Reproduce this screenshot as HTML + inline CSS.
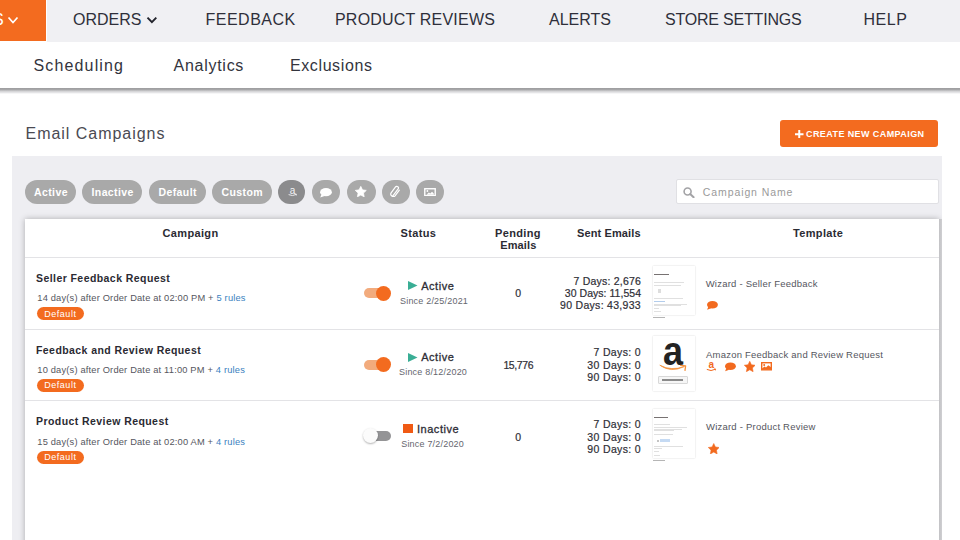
<!DOCTYPE html>
<html><head><meta charset="utf-8">
<style>
*{margin:0;padding:0;box-sizing:border-box}
html,body{width:960px;height:540px;overflow:hidden;background:#fff;font-family:"Liberation Sans",sans-serif;color:#2f2f37}
.a{position:absolute}
.t{position:absolute;white-space:nowrap;line-height:1}
#topnav{left:47px;top:0;width:913px;height:42px;background:#f0f0f3}
#orange{left:0;top:0;width:46px;height:41px;background:#f36b1f;overflow:hidden}
.nav{font-size:16px;color:#2e2f3a;top:11.5px}
#subnav{left:0;top:42px;width:960px;height:46px;background:#fff}
#shadow{left:0;top:87.5px;width:960px;height:6.5px;background:linear-gradient(#9c9c9e 0%,#a8a8aa 30%,#cfcfd1 50%,#e4e4e6 75%,#fff 100%)}
.sub{font-size:16px;color:#33343d;top:57.7px;letter-spacing:0.9px}
#title{left:25.5px;top:125.7px;font-size:16px;color:#4a4a52;letter-spacing:0.97px}
#btn{left:780px;top:120px;width:158px;height:27px;background:#f36b1f;border-radius:3px}
#btntxt{left:806px;top:129.6px;font-size:9px;font-weight:bold;color:#fff;letter-spacing:0.41px}
#gray{left:12px;top:156px;width:930px;height:400px;background:#eeeef2;overflow:hidden}
.pill{position:absolute;top:180px;height:24px;border-radius:12px;background:#a9a9a9}
.ptxt{font-size:10.5px;font-weight:bold;color:#fff;top:186.9px;letter-spacing:0.4px}
#search{left:676px;top:179px;width:262.5px;height:25.2px;background:#fff;border:1px solid #e0e0e4;border-radius:2px}
#ph{left:702.8px;top:186.9px;font-size:10.5px;color:#9a9a9a;letter-spacing:0.9px}
#card{left:13px;top:63px;width:913.5px;height:340px;background:#fff;box-shadow:0 0 6px rgba(0,0,0,0.28)}
.hline{position:absolute;left:25px;width:913.5px;height:1px;background:#e3e3e6}
.hd{font-size:11px;font-weight:bold;color:#2b2b33;top:227.9px;letter-spacing:0.35px}
.ttl{font-size:10.5px;font-weight:bold;color:#2a2a32;letter-spacing:0.43px}
.sub2{font-size:9.3px;color:#55565e;letter-spacing:0.18px}
.sub2 b{font-weight:normal;color:#3b7fc0}
.badge{position:absolute;left:37px;width:47px;height:13px;border-radius:7px;background:#f36b1f}
.btxt{font-size:9px;color:#fff;letter-spacing:0.54px}
.st{font-size:11px;font-weight:normal;color:#2e2e36;-webkit-text-stroke:0.3px #2e2e36;letter-spacing:0.55px}
.since{font-size:9px;color:#65666e;letter-spacing:0.2px}
.num{font-size:10.5px;color:#2e2e36;-webkit-text-stroke:0.2px #2e2e36;letter-spacing:0.12px}
.tn{font-size:9.5px;color:#55565e;letter-spacing:0.22px}
.row{position:absolute;left:0;width:960px;height:0}
.trk{width:24px;height:10px;border-radius:5px;background:#f2ab7d}
.trk.off{width:23px;height:9.5px;background:#949496}
.knob{width:15px;height:15px;border-radius:50%;background:#f36b1f}
.knob.off{background:#fbfbfb;box-shadow:0 1px 2px rgba(0,0,0,0.3)}
.r{right:319px;text-align:right}
.thumb{background:#fff;box-shadow:0 0 1.5px rgba(0,0,0,0.18)}
.tl{left:1.5px;height:1px;background:#e0e0e0}

</style></head><body>
<div id="topnav" class="a"></div>
<div id="orange" class="a">
  <div class="t" style="left:-7px;top:11.5px;font-size:16px;color:#fff">S</div>
  <svg class="a" style="left:7px;top:15.5px" width="12" height="9" viewBox="0 0 12 9"><polyline points="1.5,1.5 6,6.5 10.5,1.5" fill="none" stroke="#fff" stroke-width="1.7"/></svg>
</div>
<div class="t nav" style="left:73px">ORDERS</div>
<svg class="a" style="left:145.5px;top:16px" width="12" height="9" viewBox="0 0 12 9"><polyline points="1.5,1.7 5.9,6.2 10.3,1.7" fill="none" stroke="#22232c" stroke-width="1.9"/></svg>
<div class="t nav" style="left:205.5px;letter-spacing:0.5px">FEEDBACK</div>
<div class="t nav" style="left:335px;letter-spacing:0.2px">PRODUCT REVIEWS</div>
<div class="t nav" style="left:549px">ALERTS</div>
<div class="t nav" style="left:665px;letter-spacing:-0.2px">STORE SETTINGS</div>
<div class="t nav" style="left:863.5px;letter-spacing:0.5px">HELP</div>

<div id="subnav" class="a"></div><div id="shadow" class="a"></div>
<div class="t sub" style="left:33.5px;letter-spacing:1.15px">Scheduling</div>
<div class="t sub" style="left:173.5px;letter-spacing:0.73px">Analytics</div>
<div class="t sub" style="left:290px;letter-spacing:0.6px">Exclusions</div>

<div id="title" class="t">Email Campaigns</div>
<div id="btn" class="a"></div>
<svg class="a" style="left:795.3px;top:129.7px" width="8.5" height="8.5" viewBox="0 0 8.5 8.5"><path d="M4.25 0V8.5M0 4.25H8.5" stroke="#fff" stroke-width="2"/></svg>
<div id="btntxt" class="t">CREATE NEW CAMPAIGN</div>

<div id="gray" class="a"><div id="card" class="a"></div><div class="a" style="left:926.5px;top:63px;width:3.5px;height:340px;background:linear-gradient(to right,#c2c2c5,#cfcfd2)"></div></div>
<div class="pill" style="left:25px;width:51px"></div>
<div class="t ptxt" style="left:34px">Active</div>
<div class="pill" style="left:82px;width:60px"></div>
<div class="t ptxt" style="left:91.5px">Inactive</div>
<div class="pill" style="left:148.5px;width:57.5px"></div>
<div class="t ptxt" style="left:158.5px">Default</div>
<div class="pill" style="left:212px;width:60px"></div>
<div class="t ptxt" style="left:221.5px">Custom</div>
<div class="pill" style="left:278px;width:27px;background:#8b8b8d"></div>
<div class="pill" style="left:311.5px;width:28.5px"></div>
<div class="pill" style="left:346.5px;width:29px"></div>
<div class="pill" style="left:382px;width:27.5px"></div>
<div class="pill" style="left:416px;width:27.5px"></div>

<div id="search" class="a"></div>
<div id="ph" class="t">Campaign Name</div>

<div class="t hd" style="left:162.5px">Campaign</div>
<div class="t hd" style="left:400.5px">Status</div>
<div class="t hd" style="left:495px">Pending</div>
<div class="t hd" style="left:500.3px;top:240.1px;letter-spacing:0.1px">Emails</div>
<div class="t hd" style="left:577px;letter-spacing:0.12px">Sent Emails</div>
<div class="t hd" style="left:793px">Template</div>
<div class="hline" style="top:257px"></div>
<div class="hline" style="top:329px"></div>
<div class="hline" style="top:400px"></div>


<!-- ROW 1 -->
<div class="row" style="top:0">
  <div class="t ttl" style="left:36px;top:273px">Seller Feedback Request</div>
  <div class="t sub2" style="left:37.3px;top:294.3px">14 day(s) after Order Date at 02:00 PM + <b>5 rules</b></div>
  <div class="badge" style="top:307.2px"></div>
  <div class="t btxt" style="left:44.2px;top:309.9px">Default</div>
  <div class="a trk" style="left:363.5px;top:288px"></div>
  <div class="a knob" style="left:375.6px;top:285.6px"></div>
  <svg class="a" style="left:408px;top:281px" width="10" height="9" viewBox="0 0 10 9"><polygon points="0,0 9.5,4.5 0,9" fill="#3aae95"/></svg>
  <div class="t st" style="left:421.2px;top:280.6px">Active</div>
  <div class="t since" style="left:400px;top:296.5px">Since 2/25/2021</div>
  <div class="t num" style="left:515.2px;top:288.1px">0</div>
  <div class="t num r" style="top:275.6px;letter-spacing:0.2px">7 Days: 2,676</div>
  <div class="t num r" style="top:288.1px;letter-spacing:0.03px">30 Days: 11,554</div>
  <div class="t num r" style="top:300.3px;letter-spacing:0.3px">90 Days: 43,933</div>
  
  <div class="t tn" style="left:705.7px;top:278.9px">Wizard - Seller Feedback</div>
</div>
<!-- ROW 2 -->
<div class="row" style="top:71.5px">
  <div class="t ttl" style="left:36px;top:273px">Feedback and Review Request</div>
  <div class="t sub2" style="left:37.3px;top:294.3px">10 day(s) after Order Date at 11:00 PM + <b>4 rules</b></div>
  <div class="badge" style="top:307.2px"></div>
  <div class="t btxt" style="left:44.2px;top:309.9px">Default</div>
  <div class="a trk" style="left:363.5px;top:288px"></div>
  <div class="a knob" style="left:375.6px;top:285.6px"></div>
  <svg class="a" style="left:408px;top:281px" width="10" height="9" viewBox="0 0 10 9"><polygon points="0,0 9.5,4.5 0,9" fill="#3aae95"/></svg>
  <div class="t st" style="left:421.2px;top:280.6px">Active</div>
  <div class="t since" style="left:399px;top:296.5px">Since 8/12/2020</div>
  <div class="t num" style="left:503.4px;top:288.1px;letter-spacing:-0.4px">15,776</div>
  <div class="t num r" style="top:275.6px;letter-spacing:0.35px">7 Days: 0</div>
  <div class="t num r" style="top:288.1px;letter-spacing:0.35px">30 Days: 0</div>
  <div class="t num r" style="top:300.3px;letter-spacing:0.35px">90 Days: 0</div>
  
  <div class="t tn" style="left:706px;top:278.9px">Amazon Feedback and Review Request</div>
</div>
<!-- ROW 3 -->
<div class="row" style="top:143.5px">
  <div class="t ttl" style="left:36px;top:272.2px">Product Review Request</div>
  <div class="t sub2" style="left:37.3px;top:294.3px">15 day(s) after Order Date at 02:00 AM + <b>4 rules</b></div>
  <div class="badge" style="top:307.2px"></div>
  <div class="t btxt" style="left:44.2px;top:309.9px">Default</div>
  <div class="a trk off" style="left:368px;top:287.5px"></div>
  <div class="a knob off" style="left:363px;top:284.8px"></div>
  <div class="a" style="left:403px;top:280.4px;width:9.5px;height:8.7px;background:#f05a14"></div>
  <div class="t st" style="left:416.9px;top:280.6px">Inactive</div>
  <div class="t since" style="left:401.2px;top:296.5px">Since 7/2/2020</div>
  <div class="t num" style="left:515.2px;top:288.1px">0</div>
  <div class="t num r" style="top:275.6px;letter-spacing:0.35px">7 Days: 0</div>
  <div class="t num r" style="top:288.1px;letter-spacing:0.35px">30 Days: 0</div>
  <div class="t num r" style="top:300.3px;letter-spacing:0.35px">90 Days: 0</div>
  
  <div class="t tn" style="left:706px;top:278.5px">Wizard - Product Review</div>
</div>


<!-- thumb 1 -->
<div class="a thumb" style="left:652.5px;top:266px;width:42px;height:48.5px">
  <div class="a" style="left:1.5px;top:7.5px;width:15px;height:1.6px;background:#777272"></div>
  <div class="a tl" style="top:16px;width:30px"></div>
  <div class="a tl" style="top:19px;width:27px"></div>
  <div class="a" style="left:5px;top:23px;width:3px;height:4px;background:#ddd"></div>
  <div class="a tl" style="top:31.5px;width:29px"></div>
  <div class="a tl" style="top:34.5px;width:11px;background:#b3cdec"></div>
  <div class="a tl" style="top:37.5px;width:33px"></div>
  <div class="a tl" style="top:39px;width:27px"></div>
  <div class="a tl" style="top:41.5px;width:5px"></div>
  <div class="a tl" style="top:44.5px;width:7px"></div>
</div>
<div class="a tl" style="left:652.5px;top:317px;width:12px;background:#b5b5b5"></div>
<!-- thumb 2 amazon -->
<div class="a thumb" style="left:652.6px;top:336px;width:42px;height:54.5px">
  <svg class="a" style="left:5px;top:5px" width="32" height="31" viewBox="0 0 32 31">
    <text x="0" y="0" text-anchor="middle" font-family="Liberation Sans" font-weight="bold" font-size="30" fill="#232323" transform="translate(14.9 24.2) scale(1.2 1.36)">a</text>
    <path d="M1.8 24.2 Q13 32.2 26.2 25.6 Q13 30.2 1.8 24.2z" fill="#f5913a" stroke="#f5913a" stroke-width="0.7" stroke-linejoin="round"/>
    <path d="M22.6 24.4 L27.6 25.0 L27.0 29.4" fill="none" stroke="#f5913a" stroke-width="1.3" stroke-linecap="round" stroke-linejoin="round"/>
  </svg>
  <div class="a" style="left:5.7px;top:40.3px;width:30px;height:7.5px;background:#f6f6f6;border:1px solid #d8d8d8;border-radius:1px"></div>
  <div class="a" style="left:9.5px;top:43.4px;width:21px;height:1.2px;background:#8a8a8a"></div>
</div>
<!-- thumb 3 -->
<div class="a thumb" style="left:652.5px;top:408.5px;width:42px;height:49px">
  <div class="a" style="left:1.5px;top:8px;width:14px;height:1.6px;background:#777272"></div>
  <div class="a tl" style="top:15.5px;width:16px"></div>
  <div class="a tl" style="top:18.5px;width:33px"></div>
  <div class="a tl" style="top:20px;width:28px"></div>
  <div class="a tl" style="top:21.5px;width:20px"></div>
  <div class="a tl" style="top:25.5px;width:19px"></div>
  <div class="a" style="left:7.5px;top:30.5px;width:10px;height:3px;background:#c5daf3"></div>
  <div class="a" style="left:4px;top:31px;width:2px;height:2px;background:#c4c4c4"></div>
  <div class="a tl" style="top:37.5px;width:29px"></div>
  <div class="a tl" style="top:39.5px;width:8px"></div>
  <div class="a tl" style="top:42.5px;width:5px"></div>
  <div class="a tl" style="top:46px;width:6px"></div>
</div>
<div class="a tl" style="left:652.5px;top:460px;width:12px;background:#b5b5b5"></div>
<!-- filter icons -->
<svg class="a" style="left:287px;top:186px" width="11" height="11" viewBox="0 0 11 11"><text x="5.5" y="7.6" text-anchor="middle" font-family="Liberation Sans" font-size="10" fill="#f4f4f6">a</text><path d="M1.6 8.6 Q5.5 10.6 9.2 8.4" fill="none" stroke="#f4f4f6" stroke-width="0.9"/><path d="M8.2 8.0 L9.5 8.3 L9.3 9.5" fill="none" stroke="#f4f4f6" stroke-width="0.8"/></svg>
<svg class="a" style="left:319px;top:188px" width="13" height="10" viewBox="0 0 13 10"><ellipse cx="7" cy="4.2" rx="5.9" ry="4.1" fill="#fff"/><path d="M2.6 6.2 L1.2 9.6 L5.6 7.9z" fill="#fff"/></svg>
<svg class="a" style="left:355.3px;top:186px" width="11.6" height="10.8" viewBox="0 0 24 22"><path d="M12.00 0.60 L15.47 7.83 L23.41 8.89 L17.61 14.42 L19.05 22.31 L12.00 18.50 L4.95 22.31 L6.39 14.42 L0.59 8.89 L8.53 7.83z" fill="#fff" stroke="#fff" stroke-width="1.5" stroke-linejoin="round"/></svg>
<svg class="a" style="left:388.7px;top:184.8px" width="12" height="12" viewBox="0 0 12 12"><path d="M3.2 10.6 L9.4 4.4 A1.6 1.6 0 0 0 7.1 2.1 L1.9 7.3 A2.5 2.5 0 0 0 5.4 10.8 L10.4 5.8" fill="none" stroke="#fff" stroke-width="1.2" stroke-linecap="round" transform="rotate(-8 6 6)"/></svg>
<svg class="a" style="left:423.5px;top:187.5px" width="12.2" height="8.4" viewBox="0 0 13 9"><rect x="0.8" y="0.8" width="11.2" height="7.4" fill="none" stroke="#fff" stroke-width="1.5"/><circle cx="3.6" cy="3.2" r="1" fill="#fff"/><path d="M2.5 7.2 L5.2 4.8 L6.6 6 L8.6 3.9 L10.6 6.2 L10.6 7.2z" fill="#fff"/></svg>
<!-- search icon -->
<svg class="a" style="left:683px;top:187px" width="12" height="11" viewBox="0 0 12 11"><circle cx="4.6" cy="4.5" r="3.5" fill="none" stroke="#a3a3a6" stroke-width="1.6"/><path d="M7.2 7.1 L10.6 10.3" stroke="#a3a3a6" stroke-width="2" stroke-linecap="round"/></svg>
<!-- template icons -->
<svg class="a" style="left:705.5px;top:300px" width="12" height="11" viewBox="0 0 13 10"><ellipse cx="7" cy="4.2" rx="5.9" ry="4.1" fill="#f26a1f"/><path d="M2.6 6.2 L1.2 9.6 L5.6 7.9z" fill="#f26a1f"/></svg>
<svg class="a" style="left:705.7px;top:361px" width="11" height="11" viewBox="0 0 11 11"><text x="5.3" y="7.2" text-anchor="middle" font-family="Liberation Sans" font-weight="bold" font-size="10" fill="#f26a1f">a</text><path d="M0.8 8.4 Q5 10.8 9.4 8.2" fill="none" stroke="#f26a1f" stroke-width="1"/><path d="M8.2 7.8 L9.6 8.1 L9.4 9.4" fill="none" stroke="#f26a1f" stroke-width="0.9"/></svg>
<svg class="a" style="left:723.5px;top:361.5px" width="12" height="10" viewBox="0 0 13 10"><ellipse cx="7" cy="4.2" rx="5.9" ry="4.1" fill="#f26a1f"/><path d="M2.6 6.2 L1.2 9.6 L5.6 7.9z" fill="#f26a1f"/></svg>
<svg class="a" style="left:743.5px;top:361px" width="11.5" height="10.5" viewBox="0 0 24 22"><path d="M12.00 0.60 L15.47 7.83 L23.41 8.89 L17.61 14.42 L19.05 22.31 L12.00 18.50 L4.95 22.31 L6.39 14.42 L0.59 8.89 L8.53 7.83z" fill="#f26a1f" stroke="#f26a1f" stroke-width="1.2" stroke-linejoin="round"/></svg>
<svg class="a" style="left:761px;top:362px" width="11" height="8.5" viewBox="0 0 11 8.5"><rect x="0.7" y="0.7" width="9.6" height="7.1" fill="none" stroke="#f26a1f" stroke-width="1.4"/><circle cx="3.2" cy="2.9" r="1" fill="#f26a1f"/><path d="M1 7.5 L1 6.4 L3.6 4.6 L5 5.6 L7.3 3.2 L10 5.2 L10 7.5z" fill="#f26a1f"/></svg>
<svg class="a" style="left:707.5px;top:443px" width="11.5" height="11" viewBox="0 0 24 22"><path d="M12.00 0.60 L15.47 7.83 L23.41 8.89 L17.61 14.42 L19.05 22.31 L12.00 18.50 L4.95 22.31 L6.39 14.42 L0.59 8.89 L8.53 7.83z" fill="#f26a1f" stroke="#f26a1f" stroke-width="1.2" stroke-linejoin="round"/></svg>
</body></html>
